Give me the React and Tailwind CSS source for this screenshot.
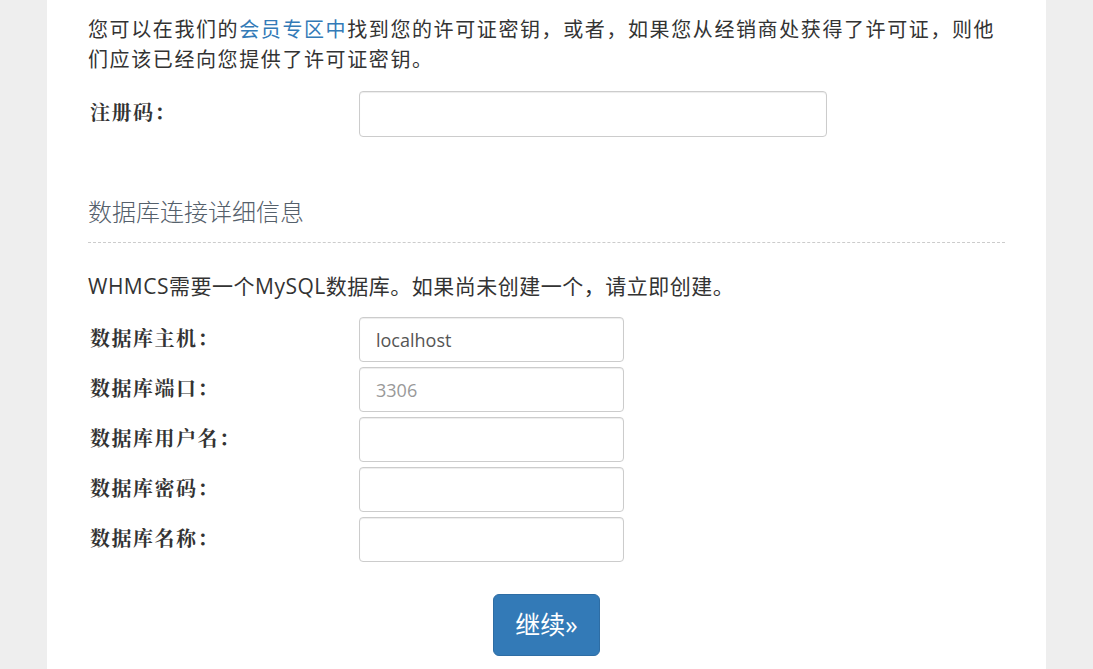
const labelFont = { fontFamily: '"Noto Serif CJK SC", "Liberation Serif", "Noto Sans CJK SC", serif' };

const Field = ({ label, value, placeholder, wide }) => (
  <div className="flex items-center">
    <label className="w-[271px] shrink-0 pl-[2px] text-[20px] font-bold tracking-[1.5px] text-[#333] pb-[4px]" style={labelFont}>
      {label}
    </label>
    <input
      defaultValue={value}
      placeholder={placeholder}
      className={`${wide ? "w-[468px] h-[46px]" : "w-[265px] h-[45px]"} rounded-[4px] border border-[#ccc] bg-white px-[16px] text-[18px] text-[#555] placeholder:text-[#999] outline-none shadow-[inset_0_1px_1px_rgba(0,0,0,0.075)]`}
    />
  </div>
);

export default function App() {
  return (
    <div
      className="min-h-[669px] bg-[#eeeeee] pl-[47px] pr-[47px]"
      style={{ fontFamily: '"Open Sans", "Noto Sans CJK SC", sans-serif' }}
    >
      <div className="w-[999px] min-h-[669px] bg-white pl-[41px] pr-[41px] pt-[15px]">
        <p className="text-[20px] leading-[30px] text-[#333] tracking-[1.6px]">
          您可以在我们的<a className="text-[#337ab7]">会员专区中</a>找到您的许可证密钥，或者，如果您从经销商处获得了许可证，则他们应该已经向您提供了许可证密钥。
        </p>

        <div className="mt-[16px]">
          <Field label="注册码：" wide />
        </div>

        <h2 className="mt-[58px] text-[24px] font-light leading-[34px] text-[#55606b]">数据库连接详细信息</h2>
        <div className="mt-[13px] border-t border-dashed border-[#ccc] w-[917px]" />

        <p className="mt-[28px] text-[21px] leading-[30px] text-[#333] tracking-[0.5px]">
          WHMCS需要一个MySQL数据库。如果尚未创建一个，请立即创建。
        </p>

        <div className="mt-[16px] flex flex-col gap-[5px] w-[917px]">
          <Field label="数据库主机：" value="localhost" />
          <Field label="数据库端口：" placeholder="3306" />
          <Field label="数据库用户名：" />
          <Field label="数据库密码：" />
          <Field label="数据库名称：" />
        </div>

        <div className="mt-[32px] flex justify-center w-[917px]">
          <button className="h-[62px] w-[107px] rounded-[6px] bg-[#337ab7] border border-[#2e6da4] text-white text-[25px]">
            继续»
          </button>
        </div>
      </div>
    </div>
  );
}
